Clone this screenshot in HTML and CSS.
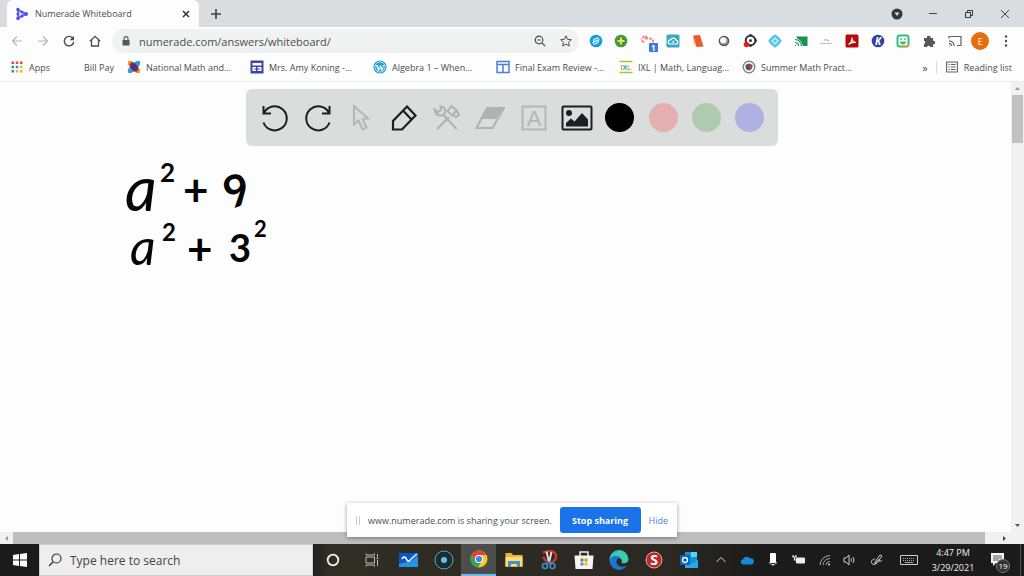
FILE: index.html
```
<!DOCTYPE html>
<html lang="en">

<head>
    <meta charset="UTF-8" />
    <meta name="viewport" content="width=device-width, initial-scale=1" />
    <title>Numerade Whiteboard</title>
    <link rel="stylesheet" href="styles.css">
</head>

<body>
    <!-- Tab strip -->
    <header class="tab-strip">
        <div class="tab">
            <svg class="tab-icon" width="14" height="14" viewBox="0 0 14 14"><path d="M3 2v10M3 3l8 4-8 4" fill="none" stroke="#6a6cf0" stroke-width="2"/><g fill="#5156e8"><circle cx="3" cy="2.500" r="1.800"/><circle cx="3" cy="7" r="1.600"/><circle cx="3" cy="11.500" r="1.800"/><circle cx="7" cy="5" r="1.600"/><circle cx="7" cy="9" r="1.600"/><circle cx="11" cy="7" r="2"/></g></svg>
            <span class="tab-title">Numerade Whiteboard</span>
            <button class="tab-close" aria-label="Close tab"><svg width="8" height="8" viewBox="0 0 8 8"><path d="M1 1l6 6M7 1L1 7" stroke="#333" stroke-width="1.500"/></svg></button>
        </div>
        <button class="new-tab" aria-label="New tab"><svg width="12" height="12" viewBox="0 0 12 12"><path d="M6 1v10M1 6h10" stroke="#3c4043" stroke-width="1.600"/></svg></button>
        <div class="window-controls">
            <button aria-label="Tab search"><svg width="12" height="12" viewBox="0 0 12 12"><circle cx="6" cy="6" r="5.500" fill="#35383b"/><path d="M3.500 4.500h5L6 8z" fill="#dee1e6"/></svg></button>
            <button aria-label="Minimize"><svg width="10" height="10" viewBox="0 0 10 10"><path d="M1 4.500h8" stroke="#444"/></svg></button>
            <button aria-label="Restore"><svg width="10" height="10" viewBox="0 0 10 10"><path d="M1.500 3.500h5v5h-5zM3.500 3V1.500h5v5H7" fill="none" stroke="#333"/></svg></button>
            <button aria-label="Close"><svg width="10" height="10" viewBox="0 0 10 10"><path d="M1 1l8 8M9 1L1 9" stroke="#444"/></svg></button>
        </div>
    </header>

    <!-- Address bar and extensions -->
    <nav class="toolbar">
        <button class="nav-btn" aria-label="Back"><svg width="12" height="12" viewBox="0 0 12 12"><path d="M11 6H1.500M6 1.500L1.500 6 6 10.500" fill="none" stroke="#b4b6b9" stroke-width="1.200"/></svg></button>
        <button class="nav-btn" aria-label="Forward"><svg width="12" height="12" viewBox="0 0 12 12"><path d="M1 6h9.500M6 1.500l4.500 4.500L6 10.500" fill="none" stroke="#b4b6b9" stroke-width="1.200"/></svg></button>
        <button class="nav-btn" aria-label="Reload"><svg width="12" height="12" viewBox="0 0 12 12"><path d="M10 3.500A4.700 4.700 0 1 0 10.700 7" fill="none" stroke="#4a4d51" stroke-width="1.400"/><path d="M11 .8v4.400H6.600z" fill="#4a4d51"/></svg></button>
        <button class="nav-btn" aria-label="Home"><svg width="12" height="12" viewBox="0 0 12 12"><path d="M.8 6.300L6 1.300l5.200 5M2.500 5v6h7V5" fill="none" stroke="#4a4d51" stroke-width="1.300"/></svg></button>
        <div class="address">
            <svg width="8" height="10" viewBox="0 0 8 10"><path d="M.5 4h7v5.500h-7z" fill="#54575b"/><path d="M2 4V2.600a2 2 0 0 1 4 0V4" fill="none" stroke="#54575b" stroke-width="1.100"/></svg>
            <input type="text" aria-label="Address" value="numerade.com/answers/whiteboard/">
            <button aria-label="Zoom"><svg width="12" height="12" viewBox="0 0 12 12"><circle cx="5" cy="5" r="3.800" fill="none" stroke="#4a4d51" stroke-width="1.200"/><path d="M3.300 5h3.400M8 8l3.200 3.200" stroke="#4a4d51" stroke-width="1.200"/></svg></button>
            <button aria-label="Bookmark this page"><svg width="12" height="12" viewBox="0 0 12 12"><path d="M6 .8l1.500 3.500 3.800.4-2.800 2.500.8 3.800L6 9.100 2.700 11l.8-3.800L.7 4.700l3.800-.4z" fill="none" stroke="#4a4d51"/></svg></button>
        </div>
        <div class="extensions">
            <button aria-label="Link"><svg width="14" height="14" viewBox="0 0 14 14"><circle cx="7" cy="7" r="6.300" fill="#169be4"/><path d="M4 9.500l1-4 4.500-1.800M10 4.500l-1 4-4.500 1.800M5.300 7.800l3.500-1.700" stroke="#cdeeff" fill="none" stroke-width="1.300"/></svg></button>
            <button aria-label="Add"><svg width="14" height="14" viewBox="0 0 14 14"><circle cx="7" cy="7" r="6.300" fill="#43983d"/><path d="M7 3.500v7M3.500 7h7" stroke="#e6e64a" stroke-width="2"/></svg></button>
            <button class="has-badge" aria-label="Share"><svg width="14" height="14" viewBox="0 0 14 14"><path d="M7.500 4L5 1.800 1 5.500M1.500 6.500L5 9M5 4.500h5.500l3 2.500-2 2" fill="none" stroke="#f18a82" stroke-width="2" stroke-dasharray="3 1"/></svg><span class="badge">1</span></button>
            <button aria-label="Cloud"><svg width="14" height="14" viewBox="0 0 14 14"><rect x=".5" y=".5" width="13" height="13" rx="1.500" fill="#38a8c5"/><path d="M4 10h6a1.800 1.800 0 0 0 .3-3.600A3 3 0 0 0 4.600 6 2 2 0 0 0 4 10z" fill="none" stroke="#fff" stroke-width="1.200"/><circle cx="7.300" cy="7.800" r="1" fill="#fff"/></svg></button>
            <button aria-label="Office"><svg width="14" height="14" viewBox="0 0 14 14"><path d="M2 1.500L9 1l3.500 11.500L5.500 13z" fill="#ed5a29"/><path d="M2 1.500L5.500 13 3 10z" fill="#f9aa8d"/></svg></button>
            <button aria-label="Sphere"><svg width="14" height="14" viewBox="0 0 14 14"><circle cx="7" cy="7" r="4.600" fill="#9a9c9e" stroke="#55585c" stroke-width="1.500"/><circle cx="6.200" cy="6.200" r="3" fill="#fff"/></svg></button>
            <button aria-label="Recorder"><svg width="14" height="14" viewBox="0 0 14 14"><circle cx="7.500" cy="6.500" r="4.800" fill="#fff" stroke="#303235" stroke-width="2"/><circle cx="7.500" cy="6.500" r="1.500" fill="#303235"/><path d="M7.500 0v2M14 6.500h-2M7.500 13v-2" stroke="#303235" stroke-width="2"/><circle cx="3.500" cy="10.500" r="2.700" fill="#f01818"/></svg></button>
            <button aria-label="Diamond"><svg width="14" height="14" viewBox="0 0 14 14"><path d="M7 .2L10 2.500l1.500 1.500L13.800 7 11.500 10 10 11.500 7 13.800 4 11.500 2.500 10 .2 7l2.300-3L4 2.500z" fill="#50c4ef"/><path d="M7 4l3 3-3 3-3-3z" fill="none" stroke="#d7f4ff" stroke-width="1.200"/></svg></button>
            <button aria-label="Classroom cast"><svg width="14" height="14" viewBox="0 0 14 14"><path d="M2 2.500h11.500V12H9z" fill="#16944f"/><path d="M1 11.500h1M1 8.500a3.500 3.500 0 0 1 3.500 3.500M1 5.500A6.500 6.500 0 0 1 7.500 12" fill="none" stroke="#fff" stroke-width="2.200"/><path d="M1 11.500h1M1 8.500a3.500 3.500 0 0 1 3.500 3.500M1 5.500A6.500 6.500 0 0 1 7.500 12" fill="none" stroke="#16944f" stroke-width="1.200"/></svg></button>
            <button aria-label="Dial"><svg width="14" height="14" viewBox="0 0 14 14"><path d="M1 9.500h12M5 6.500a3 3 0 0 1 4 0l1 1" fill="none" stroke="#bdbdbd" stroke-width="1.200"/></svg></button>
            <button aria-label="PDF"><svg width="14" height="14" viewBox="0 0 14 14"><rect x=".5" y=".5" width="13" height="13" rx="1.500" fill="#b40b0b"/><path d="M3.500 10.500c2-1 4-4.500 3.500-7 0 3 1.500 5 4 5-3-.5-5 0-7.500 2z" fill="none" stroke="#fff" stroke-width="1.100"/></svg></button>
            <button aria-label="Kami"><svg width="14" height="14" viewBox="0 0 14 14"><circle cx="7" cy="7" r="6.300" fill="#3440a0"/><text x="7" y="10.500" text-anchor="middle" class="kami-letter">K</text></svg></button>
            <button aria-label="Bitmoji"><svg width="14" height="14" viewBox="0 0 14 14"><rect x="1.500" y="1.500" width="11" height="11" rx="2" fill="#fff" stroke="#35bd76" stroke-width="2"/><path d="M4 7.500h6a3 3 0 0 1-6 0z" fill="#35bd76"/><path d="M5 4v2M9 4v2" stroke="#35bd76" stroke-width="1.400"/><path d="M7 12.500h4l1.500-1.500" fill="none" stroke="#f39b35" stroke-width="2"/></svg></button>
            <button aria-label="Extensions"><svg width="14" height="14" viewBox="0 0 14 14"><path d="M2 4h3a1.800 1.800 0 1 1 3.500 0H11v2.800a1.800 1.800 0 1 1 0 3.500V13H8.300a1.700 1.700 0 0 0-3.300 0H2v-3a1.700 1.700 0 0 0 0-3.200z" fill="#55585c"/></svg></button>
            <button aria-label="Cast"><svg width="14" height="14" viewBox="0 0 14 14"><path d="M1 4.500V2.500h12v9H9M1 12h.8M1 9.300A2.700 2.700 0 0 1 3.700 12M1 6.800A5.200 5.200 0 0 1 6.200 12" fill="none" stroke="#5f6368" stroke-width="1.200"/></svg></button>
            <button class="avatar" aria-label="Profile">E</button>
            <button aria-label="Menu"><svg width="14" height="14" viewBox="0 0 14 14"><g fill="#4a4d51"><circle cx="7" cy="2.500" r="1.200"/><circle cx="7" cy="7" r="1.200"/><circle cx="7" cy="11.500" r="1.200"/></g></svg></button>
        </div>
    </nav>

    <!-- Bookmarks -->
    <nav class="bookmarks">
        <a class="apps" href="#"><svg width="12" height="12" viewBox="0 0 12 12"><g fill="#e04a3f"><path d="M.5.5H3V3H.5zM4.800.5h2.500V3H4.800zM9 .5h2.500V3H9z"/></g><path d="M.5 4.800H3v2.500H.5zM.5 9H3v2.500H.5z" fill="#35a056"/><path d="M4.800 4.800h2.500v2.500H4.800z" fill="#4286f5"/><path d="M9 4.800h2.500v2.500H9zM4.800 9h2.500v2.500H4.800zM9 9h2.500v2.500H9z" fill="#f1b52a"/></svg>Apps</a>
        <a class="bill" href="#">Bill Pay</a>
        <a class="site" href="#"><svg width="14" height="14" viewBox="0 0 14 14"><ellipse cx="7" cy="7" rx="8" ry="3.500" transform="rotate(-45 7 7)" fill="#2c9de0"/><path d="M1 1h4l2 3-3 3-3-2zM13 13H9l-2-3 3-3 3 2z" fill="#f39a23"/><ellipse cx="7" cy="7" rx="5.500" ry="3.600" transform="rotate(50 7 7)" fill="#d63b30"/><ellipse cx="7" cy="7" rx="4.500" ry="3" transform="rotate(50 7 7)" fill="#503080"/></svg>National Math and...</a>
        <a class="site" href="#"><svg width="14" height="14" viewBox="0 0 14 14"><path d="M.5.5h13v13H.5z" fill="#3947a5"/><path d="M2.500 3h9v2.500h-9zM2.500 7H6v4H2.500zM7.500 7h4v4h-4z" fill="#fff"/><path d="M4 9h6" stroke="#3947a5"/></svg>Mrs. Amy Koning -...</a>
        <a class="site" href="#"><svg width="14" height="14" viewBox="0 0 14 14"><circle cx="7" cy="7" r="6" fill="#fff" stroke="#25a2ca" stroke-width="1.200"/><circle cx="7" cy="7" r="4.800" fill="#25a2ca"/><text x="7" y="10.500" text-anchor="middle" class="wp-letter">W</text></svg>Algebra 1 – When...</a>
        <a class="site" href="#"><svg width="14" height="14" viewBox="0 0 14 14"><path d="M1 1.500h12v11H1zM1 4.500h12M7 4.500v8" fill="none" stroke="#4a7fe2" stroke-width="1.500"/></svg>Final Exam Review -...</a>
        <a class="site" href="#"><svg width="14" height="14" viewBox="0 0 14 14"><path d="M.5 1.500h13M.5 12.500h13" stroke="#9bcf2f" stroke-width="1.400"/><text x="7" y="9.500" text-anchor="middle" class="ixl-letters"><tspan fill="#e99500">I</tspan><tspan fill="#1c9ed1">X</tspan><tspan fill="#e9a800">L</tspan></text></svg>IXL | Math, Languag...</a>
        <a class="site" href="#"><svg width="14" height="14" viewBox="0 0 14 14"><circle cx="7" cy="7" r="5.800" fill="#eee" stroke="#777" stroke-width="1.200"/><path d="M3.500 5L7 3.500 10.500 5l-1 4L7 10.500 4 9z" fill="#485550"/><path d="M7 4l3.500 2-1 3L7 7.500z" fill="#d1363d"/></svg>Summer Math Pract...</a>
        <button class="more" aria-label="More bookmarks">»</button>
        <a class="reading" href="#"><svg width="12" height="12" viewBox="0 0 12 12"><path d="M.6 1h10.800v10H.6zM2.500 3.500h1.300M5 3.500h4.500M2.500 6h1.300M5 6h4.500M2.500 8.500h1.300M5 8.500h4.500" fill="none" stroke="#5f6368" stroke-width="1.100"/></svg>Reading list</a>
    </nav>

    <!-- Whiteboard page -->
    <main class="page">
        <svg class="writing" width="200" height="150" viewBox="0 0 200 150">
            <g class="ink">
                <text class="letter" x="15" y="61" font-size="62">a</text>
                <text x="50" y="32" font-size="26">2</text>
                <text x="73" y="56" font-size="44">+</text>
                <text x="114" y="56" font-size="44" transform="rotate(-20 127 40)">9</text>
                <text class="letter" x="20" y="115" font-size="50">a</text>
                <text x="52" y="91" font-size="24">2</text>
                <text x="77" y="115" font-size="44">+</text>
                <text x="119" y="112" font-size="38">3</text>
                <text x="144" y="87" font-size="22">2</text>
            </g>
        </svg>

        <div class="tools">
            <button aria-label="Undo"><svg width="30" height="30" viewBox="0 0 30 30"><path d="M3.500 19.500A12 12 0 1 0 4 10M3.500 3v7.500H11" fill="none" stroke="#1c1e20" stroke-width="2"/></svg></button>
            <button aria-label="Redo"><svg width="30" height="30" viewBox="0 0 30 30"><path d="M26.500 19.500A12 12 0 1 1 26 10M26.500 3v7.500H19" fill="none" stroke="#1c1e20" stroke-width="2"/></svg></button>
            <button aria-label="Select"><svg width="30" height="30" viewBox="0 0 30 30"><path d="M8 3v18.500l4.500-4 4 9 4-2-4-8.500 5.500-.5z" fill="none" stroke="#b5b6b6" stroke-width="2"/></svg></button>
            <button aria-label="Pen"><svg width="30" height="30" viewBox="0 0 30 30"><path d="M18 3.500l8.500 9L13 26.500H4v-8.500zM14 7.500l8.500 9" fill="none" stroke="#1c1e20" stroke-width="2.200"/></svg></button>
            <button aria-label="Tools"><svg width="30" height="30" viewBox="0 0 30 30"><path d="M5 26l12-12M24.500 26L12 12.500M2.500 6.500L6 9l3-2-.5-3.500c4 0 6 4 4 7.500-3 3-9 2-10-4.500zM15.500 8l4-5 5 4.500-4.500 5zM24.500 7.500L27 12l-3 2-3.500-2.500" fill="none" stroke="#b1b2b2" stroke-width="2"/></svg></button>
            <button aria-label="Eraser"><svg width="30" height="30" viewBox="0 0 30 30"><path d="M12 4.500h17L21 16H5z" fill="#b1b2b2"/><path d="M1.500 25L12 5h17L17.500 25z" fill="none" stroke="#b1b2b2" stroke-width="2"/></svg></button>
            <button aria-label="Text"><svg width="30" height="30" viewBox="0 0 30 30"><path d="M3.500 3.500h23v23h-23z" fill="none" stroke="#b5b6b6" stroke-width="2"/><text x="15" y="23" text-anchor="middle" class="tool-letter">A</text></svg></button>
            <button aria-label="Image"><svg width="32" height="30" viewBox="0 0 32 30"><rect x="1.500" y="3.500" width="29" height="23" rx="1" fill="none" stroke="#1c1e20" stroke-width="2"/><circle cx="8" cy="10" r="3" fill="#1c1e20"/><path d="M5 23.500v-3.500l5-4.500 3.500 3 7.500-8.500 6 6.500v7z" fill="#1c1e20"/></svg></button>
            <button class="swatch black" aria-label="Black"></button>
            <button class="swatch red" aria-label="Red"></button>
            <button class="swatch green" aria-label="Green"></button>
            <button class="swatch blue" aria-label="Blue"></button>
        </div>

        <div class="scroll-y">
            <svg width="13" height="13" viewBox="0 0 13 13"><path d="M4 8l2.500-3L9 8z" fill="#999"/></svg>
            <div class="thumb-y"></div>
            <svg class="scroll-down" width="13" height="13" viewBox="0 0 13 13"><path d="M4 5l2.500 3L9 5z" fill="#555"/></svg>
        </div>
        <div class="scroll-x">
            <svg width="13" height="13" viewBox="0 0 13 13"><path d="M8 4L5 6.500 8 9z" fill="#999"/></svg>
            <div class="thumb-x"></div>
            <svg width="13" height="13" viewBox="0 0 13 13"><path d="M5 4l3 2.500L5 9z" fill="#444"/></svg>
        </div>

        <div class="share-bar">
            <span class="grip"></span>
            <span class="share-text">www.numerade.com is sharing your screen.</span>
            <button class="stop-btn">Stop sharing</button>
            <a href="#">Hide</a>
        </div>
    </main>

    <!-- Windows taskbar -->
    <footer class="taskbar">
        <button class="start" aria-label="Start"><svg width="14" height="14" viewBox="0 0 14 14"><path d="M0 2l6-1v5.500H0zM7 .9L14 0v6.500H7zM0 7.500h6V13l-6-1zM7 7.500h7V14l-7-1z" fill="#fff"/></svg></button>
        <label class="search">
            <svg width="14" height="14" viewBox="0 0 14 14"><circle cx="8.500" cy="5.500" r="4.500" fill="none" stroke="#333" stroke-width="1.200"/><path d="M5.200 8.800L1 13" stroke="#333" stroke-width="1.300"/></svg>
            <input type="text" placeholder="Type here to search" aria-label="Type here to search">
        </label>
        <div class="task-icons">
            <button class="cortana" aria-label="Cortana"><svg width="14" height="14" viewBox="0 0 14 14"><circle cx="7" cy="7" r="5.300" fill="none" stroke="#f2f2f2" stroke-width="1.800"/></svg></button>
            <button class="task-view" aria-label="Task View"><svg width="14" height="14" viewBox="0 0 14 14"><path d="M1 4h8.500v6H1zM1 .5V2h8.500V.5M1 13.500V12h8.500v1.500M12.500 1v3.500M12.500 7v6M11.500 5.500h2" fill="none" stroke="#bbb"/></svg></button>
            <button aria-label="Whiteboard"><svg width="20" height="16" viewBox="0 0 20 16"><path d="M0 1h19v14H0z" fill="#0b57c9"/><path d="M0 15v-3l12-3 7-5v11z" fill="#2591e8"/><path d="M3 7c2-4 4-1 5 1s3 1 4-1" fill="none" stroke="#fff" stroke-width="1.600"/><path d="M12 7l6-5" stroke="#9fe0ff" stroke-width="2"/></svg></button>
            <button aria-label="Recorder"><svg width="20" height="20" viewBox="0 0 20 20"><circle cx="10" cy="10" r="9" fill="#192c34" stroke="#6da0af"/><circle cx="10" cy="10" r="3" fill="#62c4e5"/></svg></button>
            <button class="active" aria-label="Chrome"><svg width="18" height="18" viewBox="0 0 18 18"><circle cx="9" cy="9" r="8.500" fill="#f9c82e"/><path d="M1.600 4.800A8.500 8.500 0 0 1 16.500 5H9a4 4 0 0 0-3.500 6z" fill="#df4437"/><path d="M1.600 4.800L5.500 11A4 4 0 0 0 11 12.500l-3 5A8.500 8.500 0 0 1 1.600 4.800z" fill="#35a356"/><circle cx="9" cy="9" r="4" fill="#fff"/><circle cx="9" cy="9" r="3.100" fill="#3f83ed"/></svg></button>
            <button aria-label="File Explorer"><svg width="18" height="16" viewBox="0 0 18 16"><path d="M.5 1h6l1.500 2h9.500v12H.5z" fill="#e9b539"/><path d="M.5 5h17v9H.5z" fill="#ffdc73"/><path d="M3 9h12v6h-3v-3H6v3H3z" fill="#3f91d3"/></svg></button>
            <button aria-label="Snip"><svg width="18" height="20" viewBox="0 0 18 20"><path d="M3 2.500l7-1.500c6 0 8 6 4 10l-3 2M3 7l4 5" fill="none" stroke="#c83b27" stroke-width="2.500"/><path d="M6.500 1.500L9 12M11.500 2L9 13" stroke="#d5dde3" stroke-width="2"/><g fill="none" stroke="#3690d0" stroke-width="1.600"><circle cx="5" cy="16" r="2.500"/><circle cx="12.500" cy="16" r="2.500"/><path d="M6.500 14.500L9 12l2.500 2.500"/></g></svg></button>
            <button aria-label="Store"><svg width="20" height="20" viewBox="0 0 20 20"><path d="M6 6V2h8v4" fill="none" stroke="#eee" stroke-width="1.500"/><path d="M.5 5.500h19L18.500 19h-17z" fill="#f4f4f4"/><path d="M6.500 8.500h3v3h-3z" fill="#e85030"/><path d="M10.500 8.500h3v3h-3z" fill="#7fb92a"/><path d="M6.500 12.500h3v3h-3z" fill="#23a4e6"/><path d="M10.500 12.500h3v3h-3z" fill="#f6b91f"/></svg></button>
            <button aria-label="Edge"><svg width="20" height="20" viewBox="0 0 20 20"><path d="M.5 10A9.500 9.500 0 0 1 19.500 9c0 4-4 5-7 4 1.500-3-1-5.500-4-5.500C4 7.500 1 9 .5 10z" fill="#3ccdb0"/><path d="M.5 10A9.500 9.500 0 0 1 12 .7C7 1 1 5 .5 10z" fill="#2fb6e0"/><path d="M.5 10C2 5 9 4.500 11.500 8 8 8 6.500 11 8 14c2 3 6 3.500 10 1.500A9.500 9.500 0 0 1 .5 10z" fill="#1878cf"/></svg></button>
            <button aria-label="S app"><svg width="18" height="18" viewBox="0 0 18 18"><circle cx="9" cy="9" r="8" fill="#bd2926" stroke="#ddaaa4"/><text x="9" y="14" text-anchor="middle" class="s-letter">S</text></svg></button>
            <button aria-label="Outlook"><svg width="20" height="18" viewBox="0 0 20 18"><path d="M6 1h12v8l1 1v7H6z" fill="#1490df"/><path d="M12 1h6v5h-6z" fill="#50d9ff"/><path d="M6 9l7 4 6-4v8H6z" fill="#28a8ea"/><path d="M1 4h10v10H1z" fill="#0f62b5"/><circle cx="6" cy="9" r="2.500" fill="none" stroke="#fff" stroke-width="1.300"/></svg></button>
        </div>
        <div class="tray">
            <button aria-label="Show hidden icons"><svg width="12" height="12" viewBox="0 0 12 12"><path d="M1.500 8L6 3.500 10.500 8" fill="none" stroke="#ddd"/></svg></button>
            <button aria-label="OneDrive"><svg width="14" height="12" viewBox="0 0 14 12"><path d="M3 10.500a2.700 2.700 0 0 1 0-5.300 4 4 0 0 1 7-.7 3 3 0 0 1 1.500 6z" fill="#1689dc"/></svg></button>
            <button aria-label="Microphone"><svg width="12" height="14" viewBox="0 0 12 14"><rect x="3" y="0" width="6" height="10" rx="1" fill="#fff"/><path d="M2.500 9c0 3.500 7 3.500 7 0M6 11v2" fill="none" stroke="#ccc"/></svg></button>
            <button aria-label="Battery"><svg width="14" height="12" viewBox="0 0 14 12"><path d="M4.500 4h8v5h-8z" fill="#eee" stroke="#eee"/><path d="M1 1v2h3V1M2.500 3v3h3" fill="none" stroke="#eee" stroke-width="1.200"/></svg></button>
            <button aria-label="Network"><svg width="12" height="12" viewBox="0 0 12 12"><path d="M1 11A10 10 0 0 1 11 1.500M4 11a7 7 0 0 1 7-6.500M6.800 11A4.200 4.200 0 0 1 11 7.500" fill="none" stroke="#aaa"/><circle cx="10" cy="10.500" r="1" fill="#ddd"/></svg></button>
            <button class="volume" aria-label="Volume"><svg width="13" height="12" viewBox="0 0 13 12"><path d="M1 4h2l3-3v10L3 8H1zM8 4.500q1.200 1.500 0 3M10 3q2.200 3 0 6" fill="none" stroke="#ccc"/></svg></button>
            <button class="ink-space" aria-label="Ink workspace"><svg width="14" height="14" viewBox="0 0 14 14"><path d="M5 9L10 2l2 1-5 7-2 1zM5 6C0 6 1 12 4 11.500S7 6 9 7s-1 4 3 0" fill="none" stroke="#ccc"/></svg></button>
            <button class="keyboard" aria-label="Touch keyboard"><svg width="18" height="12" viewBox="0 0 18 12"><path d="M.5 1.500h17v9H.5z" fill="none" stroke="#ccc"/><path d="M3 4.500h12M3 6.500h12" stroke="#aaa" stroke-dasharray="1 1"/><path d="M5 8.500h8" stroke="#aaa"/></svg></button>
            <div class="clock"><span>4:47 PM</span><span>3/29/2021</span></div>
            <button class="notifications" aria-label="Notifications"><svg width="16" height="16" viewBox="0 0 16 16"><path d="M1 1h13v10H6l-3 3v-3H1z" fill="#f4f4f4"/><path d="M3 4h9M3 6h9M3 8h6" stroke="#555"/></svg><span class="count">19</span></button>
        </div>
    </footer>
</body>

</html>
```
FILE: styles.css
```
* {
    box-sizing: border-box;
}

body {
    margin: 0;
    font-family: 'Open Sans', 'Noto Sans', sans-serif;
    font-size: 9px;
    color: #4a4d51;
    background-color: #fdfdfd;
    min-height: 100vh;
    display: flex;
    flex-direction: column;
}

button {
    display: flex;
    align-items: center;
    justify-content: center;
    padding: 0;
    border: none;
    background: none;
    font-family: inherit;
    color: inherit;
    cursor: pointer;
}

a {
    color: inherit;
    text-decoration: none;
}

input {
    min-width: 0;
    padding: 0;
    border: none;
    outline: none;
    background: none;
    font-family: inherit;
    color: inherit;
}

svg {
    flex-shrink: 0;
}

/* Tab strip */
.tab-strip {
    display: flex;
    height: 27px;
    padding-left: 7px;
    background-color: #dadddf;
}

.tab {
    display: flex;
    align-items: center;
    width: 192px;
    padding: 0 9px 0 8px;
    background-color: #fdfdfd;
    border-radius: 6px 6px 0 0;
}

.tab-title {
    flex: 1;
    margin-left: 6px;
}

.new-tab {
    width: 34px;
}

.window-controls {
    display: flex;
    align-items: center;
    margin-left: auto;
    padding-right: 1px;
}

.window-controls button {
    width: 36px;
    height: 24px;
}

/* Address bar */
.toolbar {
    display: flex;
    align-items: center;
    height: 29px;
    padding: 0 5px 1px 4px;
}

.nav-btn {
    width: 26px;
    height: 24px;
}

.address {
    flex: 1;
    display: flex;
    align-items: center;
    height: 24px;
    margin: 0 4px;
    padding-left: 10px;
    background-color: #f0f2f2;
    border-radius: 12px;
}

.address input {
    flex: 1;
    margin-left: 9px;
    font-size: 11px;
}

.address button {
    width: 26px;
}

.extensions {
    display: flex;
    width: 436px;
}

.extensions button {
    flex: 1;
    height: 24px;
}

.has-badge {
    position: relative;
}

.badge {
    position: absolute;
    right: 2px;
    bottom: 1px;
    width: 9px;
    height: 9px;
    border-radius: 1px;
    background-color: #3a78e7;
    color: #fff;
    font-size: 8px;
    font-weight: bold;
    line-height: 9px;
}

.extensions .avatar {
    flex: none;
    width: 18px;
    height: 18px;
    margin: 3px 4px;
    border-radius: 50%;
    background-color: #e96d07;
    color: #fff;
    font-size: 9px;
}

.kami-letter {
    fill: #fff;
    font: italic bold 10px 'Open Sans', sans-serif;
}

.wp-letter {
    fill: #fff;
    font: bold 9px 'Liberation Serif', serif;
}

.ixl-letters {
    font: bold 7px 'Liberation Sans', sans-serif;
}

/* Bookmarks */
.bookmarks {
    display: flex;
    align-items: center;
    height: 26px;
    padding: 0 12px 3px 11px;
    border-bottom: 1px solid #eceeee;
    white-space: nowrap;
}

.bookmarks a {
    display: flex;
    align-items: center;
    gap: 6px;
}

.bookmarks .apps {
    width: 73px;
}

.bookmarks .bill {
    width: 43px;
}

.bookmarks .site {
    width: 123px;
    gap: 5px;
}

.more {
    margin-left: auto;
    padding-right: 8px;
    font-size: 11px;
}

.reading {
    padding-left: 9px;
    border-left: 1px solid #dadce0;
}

/* Whiteboard */
.page {
    position: relative;
    flex: 1;
    display: grid;
    grid-template-columns: 1fr 13px;
    grid-template-rows: 1fr 12px;
}

.writing {
    position: absolute;
    top: 68px;
    left: 110px;
}

.ink {
    font-family: Lato, sans-serif;
    font-weight: bold;
    fill: #050505;
}

.ink .letter {
    font-style: italic;
    font-weight: normal;
}

.tools {
    position: absolute;
    top: 7px;
    left: 50%;
    transform: translateX(-50%);
    display: grid;
    grid-template-columns: repeat(12, 1fr);
    align-items: center;
    justify-items: center;
    width: 532px;
    height: 57px;
    padding: 0 7px;
    border-radius: 6px;
    background-color: #dbdcdc;
}

.tools button {
    width: 30px;
    height: 30px;
}

.tool-letter {
    fill: #b5b6b6;
    font: 22px 'Liberation Sans', sans-serif;
}

.tools .swatch {
    width: 29px;
    height: 29px;
    border-radius: 50%;
}

.swatch.black {
    background-color: #000;
}

.swatch.red {
    background-color: #e3afaf;
}

.swatch.green {
    background-color: #afcbaf;
}

.swatch.blue {
    background-color: #b0b0e2;
}

.scroll-y {
    grid-column: 2;
    display: flex;
    flex-direction: column;
    background-color: #f1f1f1;
}

.thumb-y {
    height: 48px;
    margin: 0 1px;
    background-color: #c1c1c1;
}

.scroll-down {
    margin-top: auto;
}

.scroll-x {
    display: flex;
    grid-column: 1 / 3;
    align-items: center;
    padding-right: 13px;
    background-color: #f1f1f1;
}

.thumb-x {
    flex: 1;
    height: 12px;
    background-color: #bebebe;
    margin-right: 13px;
}

.share-bar {
    position: absolute;
    bottom: 7px;
    left: 50%;
    transform: translateX(-50%);
    display: flex;
    align-items: center;
    width: 330px;
    height: 34px;
    padding: 0 9px;
    background-color: #fff;
    box-shadow: 0 1px 4px rgba(0, 0, 0, 0.4);
    white-space: nowrap;
}

.grip {
    width: 4px;
    height: 9px;
    margin-right: 8px;
    border: solid #ccc;
    border-width: 0 1px;
}

.share-text {
    flex: 1;
}

.stop-btn {
    width: 81px;
    height: 26px;
    margin-right: 8px;
    border-radius: 3px;
    background-color: #1a73e8;
    color: #fff;
    font-size: 9px;
    font-weight: bold;
}

.share-bar a {
    color: #4a86e0;
}

/* Taskbar */
.taskbar {
    display: flex;
    height: 32px;
    background: linear-gradient(90deg, #1b1b1b 0%, #1b1b1b 30%, #302d24 32%, #2a2821 66%, #1b1b1b 74%);
    color: #eee;
}

.start {
    width: 39px;
}

.search {
    display: flex;
    align-items: center;
    width: 274px;
    padding-left: 8px;
    border: 1px solid #ccc;
    background-color: #eee;
    color: #444;
}

.search input {
    flex: 1;
    margin-left: 8px;
    font-size: 12px;
}

.search input::placeholder {
    color: #444;
}

.task-icons,
.tray {
    display: flex;
}

.task-icons button {
    width: 35px;
}

.task-icons .cortana,
.task-icons .task-view {
    width: 39px;
}

.task-icons .active {
    background-color: #4d4d4b;
    border-bottom: 2px solid #76b9ed;
}

.s-letter {
    fill: #fff;
    font: bold 14px 'Open Sans', sans-serif;
}

.tray {
    margin-left: auto;
    padding-right: 3px;
    border-right: 1px solid #555;
    margin-right: 3px;
}

.tray button {
    width: 26px;
}

.tray .volume {
    width: 22px;
}

.tray .ink-space {
    width: 34px;
}

.tray .keyboard {
    width: 30px;
}

.clock {
    display: flex;
    flex-direction: column;
    align-items: center;
    justify-content: center;
    width: 58px;
    font-size: 9px;
    line-height: 15px;
}

.tray .notifications {
    position: relative;
    width: 35px;
    padding-right: 3px;
}

.count {
    position: absolute;
    right: 7px;
    bottom: 3px;
    width: 14px;
    height: 14px;
    border: 1px solid #777;
    border-radius: 50%;
    background-color: #333;
    color: #fff;
    font-size: 8px;
    line-height: 12px;
}
```
